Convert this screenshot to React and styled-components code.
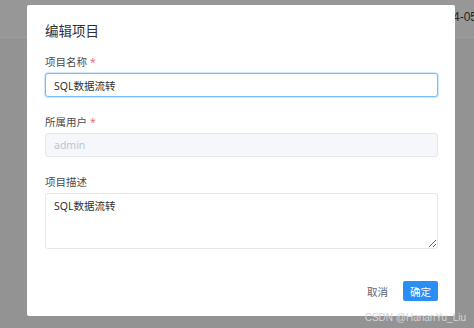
import React from "react";
import styled, { createGlobalStyle } from "styled-components";

const GlobalStyle = createGlobalStyle`
  html, body {
    margin: 0;
    padding: 0;
    background: #939393;
    font-family: "Helvetica Neue", "Noto Sans", "Noto Sans CJK SC", sans-serif;
  }
`;

const Page = styled.div`
  position: relative;
  width: 474px;
  height: 328px;
  overflow: hidden;
  background: #939393;
`;

const PageHeader = styled.div`
  height: 37px;
  display: flex;
  align-items: center;
  justify-content: flex-end;
  border-bottom: 1px solid #9d9d9d;
  background: #979797;
`;

const HeaderText = styled.span`
  font-size: 12px;
  color: #262626;
  margin-right: -3px;
  margin-top: -4px;
  font-family: "Liberation Sans", Arial, sans-serif;
`;

const Dialog = styled.div`
  position: absolute;
  left: 27px;
  top: 5px;
  width: 428px;
  height: 311px;
  background: #fff;
  border-radius: 2px;
  box-sizing: border-box;
  padding: 17px 17px 15px 18px;
  display: flex;
  flex-direction: column;
`;

const Title = styled.div`
  font-size: 13.5px;
  line-height: 18px;
  color: #303133;
  margin-bottom: 14px;
`;

const FormItem = styled.div`
  display: flex;
  flex-direction: column;
  margin-bottom: 17px;
`;

const Label = styled.label`
  font-size: 10.5px;
  line-height: 16px;
  color: #4a4c50;
  margin-bottom: 3px;
`;

const Star = styled.span`
  color: #f56c6c;
  margin-left: 3px;
`;

const Input = styled.input`
  box-sizing: border-box;
  height: 24px;
  width: 100%;
  padding: 0 8px;
  font-size: 10.5px;
  font-family: inherit;
  border-radius: 3px;
  outline: none;
  color: ${(p) => (p.disabled ? "#c0c4cc" : "#303133")};
  background: ${(p) => (p.disabled ? "#f5f7fa" : "#fff")};
  border: 1px solid ${(p) => (p.focused ? "#79bbff" : "#e4e7ed")};
  box-shadow: ${(p) => (p.focused ? "0 0 0 1px rgba(64,158,255,0.25)" : "none")};
`;

const TextArea = styled.textarea`
  box-sizing: border-box;
  height: 56px;
  width: 100%;
  padding: 4px 8px;
  font-size: 10.5px;
  line-height: 16px;
  font-family: inherit;
  color: #303133;
  border: 1px solid #e4e7ed;
  border-radius: 3px;
  outline: none;
  resize: vertical;
`;

const Footer = styled.div`
  margin-top: auto;
  display: flex;
  justify-content: flex-end;
  align-items: center;
  gap: 15px;
`;

const Button = styled.button`
  height: 20px;
  padding: ${(p) => (p.primary ? "0 7px" : "0")};
  font-size: 10.5px;
  font-family: inherit;
  border-radius: 2px;
  border: none;
  cursor: pointer;
  color: ${(p) => (p.primary ? "#fff" : "#606266")};
  background: ${(p) => (p.primary ? "#2a8ef7" : "transparent")};
`;

const Watermark = styled.div`
  position: absolute;
  right: 8px;
  bottom: 5px;
  font-size: 10px;
  color: #d4d4d4;
  font-family: "Liberation Sans", Arial, sans-serif;
`;

export default function App() {
  return (
    <Page>
      <GlobalStyle />
      <PageHeader>
        <HeaderText>4-05</HeaderText>
      </PageHeader>
      <Dialog>
        <Title>编辑项目</Title>
        <FormItem>
          <Label>
            项目名称<Star>*</Star>
          </Label>
          <Input focused defaultValue="SQL数据流转" />
        </FormItem>
        <FormItem>
          <Label>
            所属用户<Star>*</Star>
          </Label>
          <Input disabled value="admin" readOnly />
        </FormItem>
        <FormItem>
          <Label>项目描述</Label>
          <TextArea defaultValue="SQL数据流转" />
        </FormItem>
        <Footer>
          <Button>取消</Button>
          <Button primary>确定</Button>
        </Footer>
      </Dialog>
      <Watermark>CSDN @HananYu_Liu</Watermark>
    </Page>
  );
}
